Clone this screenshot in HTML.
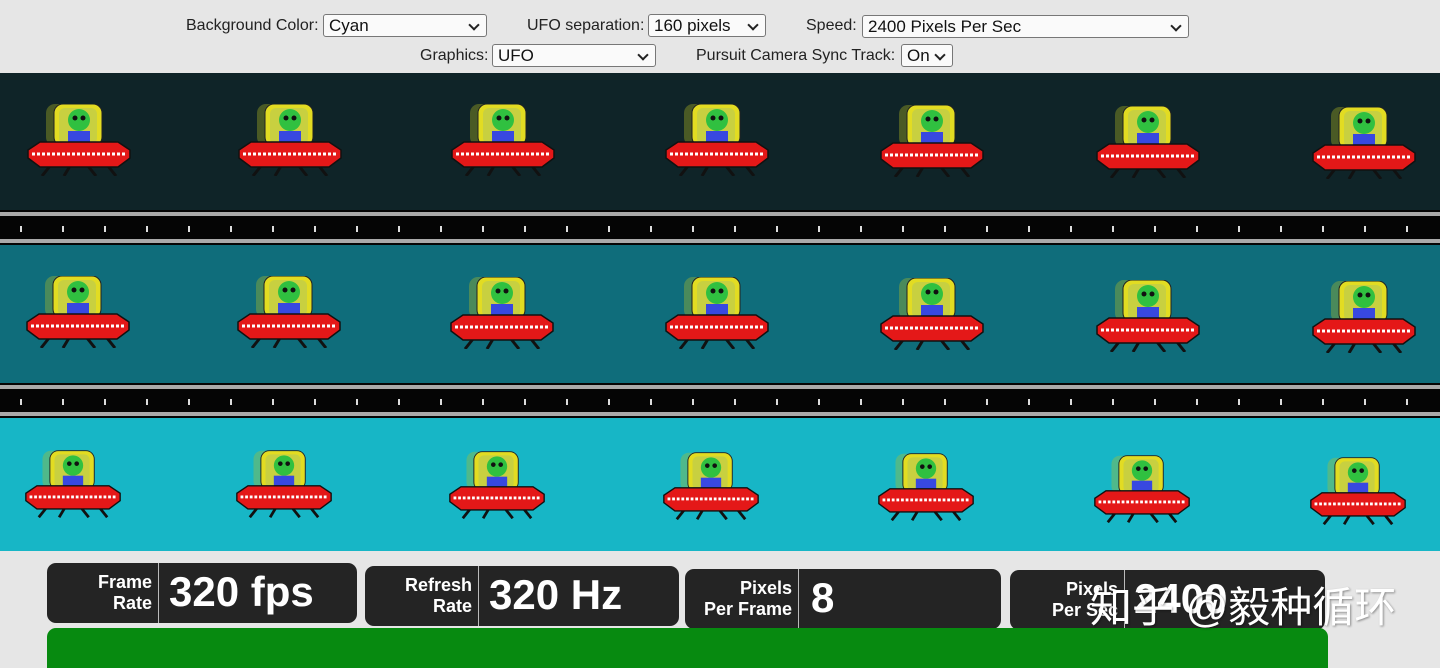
<!DOCTYPE html>
<html><head><meta charset="utf-8"><style>
*{margin:0;padding:0;box-sizing:border-box}
body{width:1440px;height:662px;overflow:hidden;background:#e6e6e6;position:relative;font-family:"Liberation Sans",Arial,sans-serif}
.lbl{position:absolute;font-size:16px;color:#222}
.sel{position:absolute;height:23px;background:#fafafa;border:1px solid #777;border-radius:3px;font-size:17px;color:#111;padding:1px 5px;line-height:19px}
.sel:after{content:"";position:absolute;right:8px;top:6px;width:6px;height:6px;border-right:2px solid #222;border-bottom:2px solid #222;transform:rotate(45deg)}
.band{position:absolute;left:0;width:1440px}
.stripe{position:absolute;left:0;width:1440px;height:35px;background:#050505;
 background-image:repeating-linear-gradient(90deg,transparent 0 20px,#ddd 20px 22px,transparent 22px 42px);background-size:42px 6px;background-repeat:repeat-x;background-position:0 16px}
.stripe:before,.stripe:after{content:"";position:absolute;left:0;right:0;height:4px;background:#aaa}
.stripe:before{top:2px}.stripe:after{bottom:2px}
.ufo{position:absolute;width:106px;height:72px}
.panel{position:absolute;height:60px;background:#242424;border-radius:9px;color:#fff;font-weight:bold;font-family:"Liberation Sans Narrow","Liberation Sans",Arial,sans-serif}
.panel .k{position:absolute;top:0;height:100%;border-right:1px solid #bbb;text-align:right;font-size:18px;line-height:21px;padding-top:9px;padding-right:6px}
.panel .v{position:absolute;top:5px;font-size:42px}
</style></head><body>
<svg width="0" height="0" style="position:absolute"><symbol id="u" viewBox="0 0 106 72">
<g opacity="0.35"><rect x="20" y="0" width="46" height="42" rx="9" fill="#b8c020"/><circle cx="40" cy="16" r="10" fill="#30b040"/></g>
<rect x="28" y="0" width="48" height="42" rx="9" fill="#e2dc22" stroke="#222" stroke-width="1"/>
<rect x="33" y="4" width="38" height="36" rx="6" fill="#c8d040"/>
<circle cx="53" cy="16" r="11" fill="#30c040"/><circle cx="49" cy="14" r="2.5" fill="#111"/><circle cx="57" cy="14" r="2.5" fill="#111"/>
<rect x="42" y="27" width="22" height="15" fill="#3848e0"/>
<line x1="24" y1="62" x2="16" y2="72" stroke="#111" stroke-width="3"/><line x1="44" y1="62" x2="38" y2="72" stroke="#111" stroke-width="3"/><line x1="62" y1="62" x2="70" y2="72" stroke="#111" stroke-width="3"/><line x1="82" y1="62" x2="90" y2="72" stroke="#111" stroke-width="3"/>
<path d="M14 38 H92 L104 46 V54 L92 63 H14 L2 54 V46 Z" fill="#e41818" stroke="#111" stroke-width="1.5"/>
<line x1="6" y1="50" x2="100" y2="50" stroke="#fff" stroke-width="3" stroke-dasharray="3 2"/>
</symbol></svg>

<div class="lbl" style="left:186px;top:17px">Background Color:</div><div class="sel" style="left:323px;top:14px;width:164px">Cyan</div>
<div class="lbl" style="left:527px;top:17px">UFO separation:</div><div class="sel" style="left:648px;top:14px;width:118px">160 pixels</div>
<div class="lbl" style="left:806px;top:17px">Speed:</div><div class="sel" style="left:862px;top:15px;width:327px">2400 Pixels Per Sec</div>
<div class="lbl" style="left:420px;top:47px">Graphics:</div><div class="sel" style="left:492px;top:44px;width:164px">UFO</div>
<div class="lbl" style="left:696px;top:47px">Pursuit Camera Sync Track:</div><div class="sel" style="left:901px;top:44px;width:52px">On</div>

<div class="band" style="top:73px;height:138px;background:#0f2428"></div>
<div class="stripe" style="top:210px"></div>
<div class="band" style="top:245px;height:138px;background:#0f6d7b"></div>
<div class="stripe" style="top:383px"></div>
<div class="band" style="top:418px;height:133px;background:#17b6c6"></div>

<svg class="ufo" style="left:26px;top:104px"><use href="#u"/></svg>
<svg class="ufo" style="left:237px;top:104px"><use href="#u"/></svg>
<svg class="ufo" style="left:450px;top:104px"><use href="#u"/></svg>
<svg class="ufo" style="left:664px;top:104px"><use href="#u"/></svg>
<svg class="ufo" style="left:879px;top:105px"><use href="#u"/></svg>
<svg class="ufo" style="left:1095px;top:106px"><use href="#u"/></svg>
<svg class="ufo" style="left:1311px;top:107px"><use href="#u"/></svg>

<svg class="ufo" style="left:25px;top:276px"><use href="#u"/></svg>
<svg class="ufo" style="left:236px;top:276px"><use href="#u"/></svg>
<svg class="ufo" style="left:449px;top:277px"><use href="#u"/></svg>
<svg class="ufo" style="left:664px;top:277px"><use href="#u"/></svg>
<svg class="ufo" style="left:879px;top:278px"><use href="#u"/></svg>
<svg class="ufo" style="left:1095px;top:280px"><use href="#u"/></svg>
<svg class="ufo" style="left:1311px;top:281px"><use href="#u"/></svg>

<svg class="ufo" style="left:24px;top:450px;width:98px;height:68px"><use href="#u"/></svg>
<svg class="ufo" style="left:235px;top:450px;width:98px;height:68px"><use href="#u"/></svg>
<svg class="ufo" style="left:448px;top:451px;width:98px;height:68px"><use href="#u"/></svg>
<svg class="ufo" style="left:662px;top:452px;width:98px;height:68px"><use href="#u"/></svg>
<svg class="ufo" style="left:877px;top:453px;width:98px;height:68px"><use href="#u"/></svg>
<svg class="ufo" style="left:1093px;top:455px;width:98px;height:68px"><use href="#u"/></svg>
<svg class="ufo" style="left:1309px;top:457px;width:98px;height:68px"><use href="#u"/></svg>

<div class="panel" style="left:47px;top:563px;width:310px"><div class="k" style="width:112px">Frame<br>Rate</div><div class="v" style="left:122px">320 fps</div></div>
<div class="panel" style="left:365px;top:566px;width:314px"><div class="k" style="width:114px">Refresh<br>Rate</div><div class="v" style="left:124px">320 Hz</div></div>
<div class="panel" style="left:685px;top:569px;width:316px"><div class="k" style="width:114px">Pixels<br>Per Frame</div><div class="v" style="left:126px">8</div></div>
<div class="panel" style="left:1010px;top:570px;width:315px"><div class="k" style="width:115px">Pixels<br>Per Sec</div><div class="v" style="left:124px">2400</div></div>
<div style="position:absolute;left:47px;top:628px;width:1281px;height:40px;background:#078a10;border-radius:9px 9px 0 0"></div>
<div style="position:absolute;left:1090px;top:574px;font-size:42px;color:#fff;font-family:'Liberation Sans','Noto Sans CJK SC',sans-serif;text-shadow:1px 1px 2px rgba(0,0,0,.4)">知乎 @毅种循环</div>
</body></html>
